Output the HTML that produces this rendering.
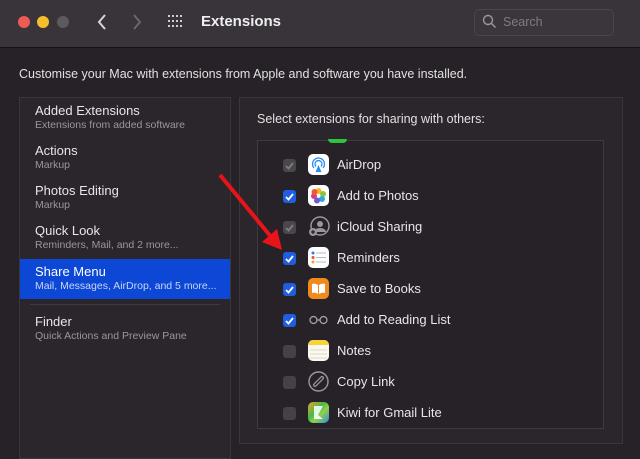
<!DOCTYPE html>
<html><head><style>
body{margin:0;width:640px;height:447px;overflow:hidden;background:#262227;font-family:"Liberation Sans",sans-serif;color:#e6e4e6;position:relative}
.tb{position:absolute;left:0;top:0;width:640px;height:47px;background:#38343a;border-bottom:1px solid #141214}
.dot{position:absolute;top:16px;width:12px;height:12px;border-radius:50%}
.abs{position:absolute}
.lp{position:absolute;left:19px;top:97px;width:210px;height:360px;background:#2a262b;border:1px solid #3a363b}
.it{position:absolute;left:15px;font-size:13px;color:#e8e6e8}
.it small{display:block;font-size:10.5px;color:#9a979b;margin-top:1px}
.rp{position:absolute;left:239px;top:97px;width:382px;height:345px;background:#2a262b;border:1px solid #3a363b}
.lb{position:absolute;left:257px;top:140px;width:345px;height:287px;border:1px solid #3e3a3f;background:#262227}
.row{position:absolute;left:0;height:22px;width:340px}
.cb{position:absolute;left:25px;top:5px;width:13px;height:13px;border-radius:3px;background:#454146}
.cb.on{background:#1f5ee0}
.cb.dis{background:#4a474b}
.cb svg{position:absolute;left:1px;top:1px}
.ic{position:absolute;left:50px;top:0;width:21px;height:21px;border-radius:5px}
.tx{position:absolute;left:79px;top:3px;font-size:13px;color:#e8e6e8}
</style></head><body>
<div class="tb">
<div class="dot" style="left:18px;background:#ed5b52"></div>
<div class="dot" style="left:37px;background:#f5be2d"></div>
<div class="dot" style="left:57px;background:#5d5a5f"></div>
<svg class="abs" style="left:96px;top:13px" width="12" height="18"><path d="M9 2L3 9l6 7" stroke="#d8d6d8" stroke-width="2" fill="none"/></svg>
<svg class="abs" style="left:131px;top:13px" width="12" height="18"><path d="M3 2l6 7-6 7" stroke="#6a676b" stroke-width="2" fill="none"/></svg>
<svg class="abs" style="left:168px;top:15px" width="16" height="14" fill="#cfcdcf"><g><rect x="0" y="0" width="2" height="2"/><rect x="4" y="0" width="2" height="2"/><rect x="8" y="0" width="2" height="2"/><rect x="12" y="0" width="2" height="2"/><rect x="0" y="5" width="2" height="2"/><rect x="4" y="5" width="2" height="2"/><rect x="8" y="5" width="2" height="2"/><rect x="12" y="5" width="2" height="2"/><rect x="0" y="10" width="2" height="2"/><rect x="4" y="10" width="2" height="2"/><rect x="8" y="10" width="2" height="2"/><rect x="12" y="10" width="2" height="2"/></g></svg>
<div class="abs" style="left:201px;top:13px;font-size:15px;font-weight:bold;color:#efedef">Extensions</div>
<div class="abs" style="left:474px;top:9px;width:138px;height:25px;border:1px solid #4a464b;border-radius:5px;background:#3a363b"></div>
<svg class="abs" style="left:482px;top:14px" width="15" height="15"><circle cx="6" cy="6" r="4.5" stroke="#9a979b" stroke-width="1.4" fill="none"/><path d="M9.5 9.5l4 4" stroke="#9a979b" stroke-width="1.5"/></svg>
<div class="abs" style="left:503px;top:15px;font-size:12.5px;color:#7f7c80">Search</div>
</div>
<div class="abs" style="left:19px;top:67px;font-size:12.5px;color:#e2e0e2">Customise your Mac with extensions from Apple and software you have installed.</div>
<div class="lp">
<div class="it" style="top:5px">Added Extensions<small>Extensions from added software</small></div>
<div class="it" style="top:45px">Actions<small>Markup</small></div>
<div class="it" style="top:85px">Photos Editing<small>Markup</small></div>
<div class="it" style="top:125px">Quick Look<small>Reminders, Mail, and 2 more...</small></div>
<div class="abs" style="left:0;top:161px;width:210px;height:40px;background:#0c47d6"></div>
<div class="it" style="top:166px;color:#fff">Share Menu<small style="color:#c9d6f5">Mail, Messages, AirDrop, and 5 more...</small></div>
<div class="abs" style="left:10px;top:206px;width:190px;height:1px;background:#3e3a3f"></div>
<div class="it" style="top:216px">Finder<small>Quick Actions and Preview Pane</small></div>
</div>
<div class="rp"></div>
<div class="abs" style="left:257px;top:112px;font-size:12.5px;color:#e2e0e2">Select extensions for sharing with others:</div>
<div class="lb">
<div class="abs" style="left:70px;top:-2px;width:19px;height:4px;background:#2ec43f;border-radius:0 0 4px 4px"></div>
<div class="row" style="top:13px"><div class="cb dis"><svg width="11" height="11"><path d="M2 6l2.5 2.5L9 3" stroke="#807d81" stroke-width="1.8" fill="none"/></svg></div><div class="ic" style="background:#fff"><svg width="21" height="21"><g stroke="#2a8ef5" fill="none" stroke-width="1.3"><path d="M6 14a6 6 0 1 1 9 0"/><path d="M8 12.5a3.5 3.5 0 1 1 5 0"/></g><path d="M10.5 11l-3 7h6z" fill="#2a8ef5"/></svg></div><div class="tx">AirDrop</div></div>
<div class="row" style="top:44px"><div class="cb on"><svg width="11" height="11"><path d="M2 6l2.5 2.5L9 3" stroke="#fff" stroke-width="1.8" fill="none"/></svg></div><div class="ic" style="background:#fff"><svg width="21" height="21"><circle cx="10.5" cy="6" r="3" fill="#f6b72a"/><circle cx="15" cy="9" r="3" fill="#8ac43e"/><circle cx="14" cy="14" r="3" fill="#31a7d8"/><circle cx="9" cy="15.5" r="3" fill="#6a5ed0"/><circle cx="6" cy="11" r="3" fill="#d93b8f"/><circle cx="6.5" cy="7" r="3" fill="#ef5a2b"/></svg></div><div class="tx">Add to Photos</div></div>
<div class="row" style="top:75px"><div class="cb dis"><svg width="11" height="11"><path d="M2 6l2.5 2.5L9 3" stroke="#807d81" stroke-width="1.8" fill="none"/></svg></div><div class="ic"><svg width="23" height="21"><circle cx="12" cy="10" r="9" stroke="#9a979b" stroke-width="1.5" fill="none"/><circle cx="12" cy="8" r="3" fill="#9a979b"/><path d="M6 16a6 4 0 0 1 12 0" fill="#9a979b"/><circle cx="5" cy="16" r="4" fill="#9a979b"/><path d="M3 16h4M5 14v4" stroke="#262227" stroke-width="1.3"/></svg></div><div class="tx">iCloud Sharing</div></div>
<div class="row" style="top:106px"><div class="cb on"><svg width="11" height="11"><path d="M2 6l2.5 2.5L9 3" stroke="#fff" stroke-width="1.8" fill="none"/></svg></div><div class="ic" style="background:#fff"><svg width="21" height="21"><circle cx="5" cy="6" r="1.5" fill="#2a7ef5"/><circle cx="5" cy="10.5" r="1.5" fill="#ef4a3b"/><circle cx="5" cy="15" r="1.5" fill="#f5a12a"/><path d="M8 6h10M8 10.5h10M8 15h10" stroke="#bbb" stroke-width="1"/></svg></div><div class="tx">Reminders</div></div>
<div class="row" style="top:137px"><div class="cb on"><svg width="11" height="11"><path d="M2 6l2.5 2.5L9 3" stroke="#fff" stroke-width="1.8" fill="none"/></svg></div><div class="ic" style="background:#f08a1c"><svg width="21" height="21"><path d="M4 6q3-1 6 1v9q-3-2-6-1zM17 6q-3-1-6 1v9q3-2 6-1z" fill="#fff"/></svg></div><div class="tx">Save to Books</div></div>
<div class="row" style="top:168px"><div class="cb on"><svg width="11" height="11"><path d="M2 6l2.5 2.5L9 3" stroke="#fff" stroke-width="1.8" fill="none"/></svg></div><div class="ic"><svg width="21" height="21"><circle cx="5.5" cy="11" r="3.5" stroke="#aaa" stroke-width="1.2" fill="none"/><circle cx="15.5" cy="11" r="3.5" stroke="#aaa" stroke-width="1.2" fill="none"/><path d="M9 11h3" stroke="#aaa" stroke-width="1.2"/></svg></div><div class="tx">Add to Reading List</div></div>
<div class="row" style="top:199px"><div class="cb"></div><div class="ic" style="background:#fbf8ec;overflow:hidden"><div style="height:5px;background:#f8d23a"></div><svg width="21" height="16"><path d="M2 5h17M2 9h17M2 13h17" stroke="#ccc" stroke-width=".8"/></svg></div><div class="tx">Notes</div></div>
<div class="row" style="top:230px"><div class="cb"></div><div class="ic"><svg width="21" height="21"><circle cx="10.5" cy="10.5" r="9.5" stroke="#9a979b" stroke-width="1.4" fill="none"/><path d="M7 14l7-7" stroke="#9a979b" stroke-width="4" stroke-linecap="round"/><path d="M7 14l7-7" stroke="#262227" stroke-width="1.5" stroke-linecap="round"/></svg></div><div class="tx">Copy Link</div></div>
<div class="row" style="top:261px"><div class="cb"></div><div class="ic" style="background:linear-gradient(135deg,#f0a030,#4ab84a 40%,#8fd14f 60%,#2f8ad8)"><svg width="21" height="21"><path d="M6 4v13h9l-5-4 5-9z" fill="#fff" opacity=".85"/></svg></div><div class="tx">Kiwi for Gmail Lite</div></div>
</div>
<svg class="abs" style="left:0;top:0" width="640" height="447"><path d="M220 175L272 238" stroke="#e8141a" stroke-width="4"/><path d="M282 250L262 242L277 229z" fill="#e8141a"/></svg>
</body></html>
